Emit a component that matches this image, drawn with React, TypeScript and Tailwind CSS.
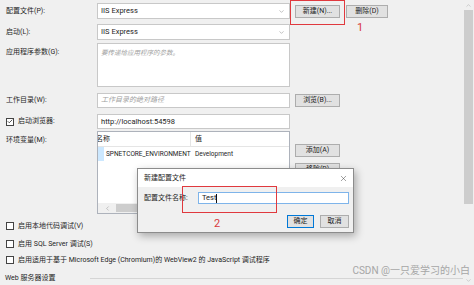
import React from "react";
import { ChevronDown, ChevronUp, ChevronLeft, X, Check } from "lucide-react";

const font = "font-['Roboto','Noto_Sans_CJK_SC',sans-serif]";

const Btn: React.FC<{ children: React.ReactNode; w?: string; primary?: boolean }> = ({ children, w = "w-[45px]", primary }) => (
  <div
    className={`${w} h-[13px] flex items-center justify-center bg-[#e1e1e1] border ${
      primary ? "border-[#0078d7]" : "border-[#adadad]"
    } text-[7px] leading-none text-[#222]`}
  >
    {children}
  </div>
);

const Select: React.FC<{ value: string }> = ({ value }) => (
  <div className="w-[193px] h-full flex items-center justify-between bg-white border border-[#c8c8c8] pl-[3px] pr-[4px] text-[7.5px]">
    <span>{value}</span>
    <ChevronDown size={7} strokeWidth={1.5} className="text-[#777]" />
  </div>
);

const Box: React.FC<{ checked?: boolean }> = ({ checked }) => (
  <div className="w-[8px] h-[8px] border border-[#444] bg-white flex items-center justify-center">
    {checked && <Check size={7} strokeWidth={3} className="text-[#222]" />}
  </div>
);

const App: React.FC = () => {
  return (
    <div className={`w-[474px] h-[285px] bg-[#f0f0f0] relative overflow-hidden flex ${font} text-[7px] leading-none text-[#1e1e1e]`}>
      {/* Main form */}
      <div className="flex-1 flex flex-col pt-[3px]">
        {/* 配置文件 */}
        <div className="flex items-center h-[16px]">
          <span className="w-[97px] pl-[6px]">配置文件(P):</span>
          <Select value="IIS Express" />
          <div className="flex gap-[6px] ml-[5px]">
            <Btn>新建(N)...</Btn>
            <Btn w="w-[42px]">删除(D)</Btn>
          </div>
        </div>

        {/* 启动 */}
        <div className="flex items-center h-[16px] mt-[5px]">
          <span className="w-[97px] pl-[6px]">启动(L):</span>
          <Select value="IIS Express" />
        </div>

        {/* 应用程序参数 */}
        <div className="flex items-start h-[44px] mt-[3px]">
          <span className="w-[97px] pl-[6px] pt-[6px]">应用程序参数(G):</span>
          <div className="w-[193px] h-full bg-white border border-[#c8c8c8] px-[3px] pt-[6px] italic text-[#a0a0a0] text-[6.5px]">
            要传递给应用程序的参数。
          </div>
        </div>

        {/* 工作目录 */}
        <div className="flex items-center h-[15px] mt-[6px]">
          <span className="w-[97px] pl-[6px]">工作目录(W):</span>
          <div className="w-[193px] h-full flex items-center bg-white border border-[#c8c8c8] px-[3px] italic text-[#a0a0a0] text-[7px]">
            工作目录的绝对路径
          </div>
          <div className="ml-[5px]">
            <Btn>浏览(B)...</Btn>
          </div>
        </div>

        {/* 启动浏览器 */}
        <div className="flex items-center h-[15px] mt-[6px]">
          <div className="w-[97px] pl-[6px] flex items-center gap-[4px]">
            <Box checked />
            <span>启动浏览器:</span>
          </div>
          <div className="w-[193px] h-full flex items-center bg-white border border-[#c8c8c8] px-[3px] text-[7.5px]">
            http://localhost:54598
          </div>
        </div>

        {/* 环境变量 */}
        <div className="flex items-start h-[83px] mt-[2px]">
          <span className="w-[97px] pl-[6px] pt-[6px]">环境变量(M):</span>
          <div className="w-[193px] h-full bg-white border border-[#adb2bb] flex flex-col overflow-hidden">
            <div className="flex h-[15px] border-b border-[#e5e5e5] items-center">
              <div className="w-[93px] h-full border-r border-[#e5e5e5] overflow-hidden flex items-center">
                <span className="-ml-[2px] whitespace-nowrap">名称</span>
              </div>
              <span className="pl-[4px]">值</span>
            </div>
            <div className="flex h-[14px] items-center">
              <div className="w-[6px] h-full bg-[#cce8ff]" />
              <span className="w-[87px] pl-[2px] whitespace-nowrap overflow-hidden text-[6.5px]">SPNETCORE_ENVIRONMENT</span>
              <span className="pl-[4px] text-[6.5px]">Development</span>
            </div>
            <div className="flex-1" />
            <div className="h-[10px] bg-[#f0f0f0] flex items-center">
              <div className="w-[18px] flex items-center justify-center text-[#888]">
                <ChevronLeft size={7} strokeWidth={1.5} />
              </div>
              <div className="w-[140px] h-[8px] bg-[#cdcdcd]" />
            </div>
          </div>
          <div className="ml-[5px] pt-[13px] flex flex-col gap-[6px]">
            <Btn>添加(A)</Btn>
            <Btn>移除(R)</Btn>
          </div>
        </div>

        {/* checkboxes */}
        <div className="flex items-center gap-[4px] h-[12px] mt-[6px] pl-[6px]">
          <Box />
          <span>启用本地代码调试(V)</span>
        </div>
        <div className="flex items-center gap-[4px] h-[12px] mt-[6px] pl-[6px]">
          <Box />
          <span>启用 SQL Server 调试(S)</span>
        </div>
        <div className="flex items-center gap-[4px] h-[12px] mt-[4px] pl-[6px]">
          <Box />
          <span>启用适用于基于 Microsoft Edge (Chromium)的 WebView2 的 JavaScript 调试程序</span>
        </div>

        {/* Web 服务器设置 */}
        <div className="flex items-center h-[12px] mt-[6px] pl-[5px]">
          <span className="w-[85px]">Web 服务器设置</span>
          <div className="flex-1 h-px bg-[#d5d5d5]" />
        </div>
      </div>

      {/* Right scrollbar */}
      <div className="w-[11px] flex flex-col items-center bg-[#f0f0f0]">
        <div className="h-[10px] flex items-center justify-center text-[#a0a0a0]">
          <ChevronUp size={7} strokeWidth={1.5} />
        </div>
        <div className="w-[9px] h-[194px] bg-[#cdcdcd]" />
        <div className="flex-1" />
        <div className="h-[10px] flex items-center justify-center text-[#a0a0a0]">
          <ChevronDown size={7} strokeWidth={1.5} />
        </div>
      </div>

      {/* Dialog: 新建配置文件 */}
      <div className="absolute left-[137px] top-[168px] w-[217px] h-[65px] border border-[#8c8c8c] bg-[#f0f0f0] shadow-[2px_3px_8px_rgba(0,0,0,0.3)] flex flex-col">
        <div className="h-[18px] bg-white flex items-center justify-between pl-[6px] pr-[5px]">
          <span>新建配置文件</span>
          <X size={9} strokeWidth={1.2} className="text-[#333]" />
        </div>
        <div className="flex items-center h-[12px] mt-[5px] pl-[6px]">
          <span className="w-[54px]">配置文件名称:</span>
          <div className="w-[151px] h-full flex items-center bg-white border border-[#7eb4ea] px-[3px] text-[7.5px]">
            Test<span className="w-px h-[9px] bg-[#111]" />
          </div>
        </div>
        <div className="flex justify-end gap-[6px] pr-[4px] mt-[11px]">
          <Btn w="w-[27px]" primary>确定</Btn>
          <Btn w="w-[29px]">取消</Btn>
        </div>
      </div>

      {/* Annotations */}
      <div className="absolute left-[290px] top-0 w-[55px] h-[25px] border border-[#e0393e]" />
      <span className="absolute left-[357px] top-[22px] text-[11px] text-[#d9383b]">1</span>
      <div className="absolute left-[182px] top-[186px] w-[95px] h-[27px] border border-[#e0393e]" />
      <span className="absolute left-[214px] top-[218px] text-[11px] text-[#d9383b]">2</span>

      {/* Watermark */}
      <span className="absolute right-[4px] top-[266px] text-[10px] text-[#a6a6a6] whitespace-nowrap">
        CSDN @一只爱学习的小白
      </span>
    </div>
  );
};

export default App;
